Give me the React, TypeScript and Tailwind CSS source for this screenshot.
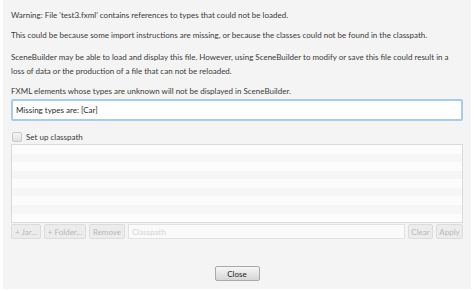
function SmallButton({ label, w }: { label: string; w: string }) {
  return (
    <div
      className={`${w} h-[15px] flex items-center justify-center rounded-[2px] border border-[#dcdcdc] bg-[#ececec] text-[8px] text-[#b8b8b8]`}
    >
      {label}
    </div>
  );
}

export default function App() {
  return (
    <div className="w-[474px] h-[291px] bg-white pl-[3px] pr-[3px] pb-[2px] font-[Lato,sans-serif]">
      <div className="h-full bg-[#f4f4f4] pl-[8px] pr-[8px] pt-[8px] text-[8px] leading-[14px] text-[#3a3a3a]">
        <p>Warning: File 'test3.fxml' contains references to types that could not be loaded.</p>
        <p className="mt-[6px]">
          This could be because some import instructions are missing, or because the classes could not be found in the classpath.
        </p>
        <p className="mt-[8px]">
          SceneBuilder may be able to load and display this file. However, using SceneBuilder to modify or save this file could result in a loss of data or the production of a file that can not be reloaded.
        </p>
        <p className="mt-[6px]">FXML elements whose types are unknown will not be displayed in SceneBuilder.</p>

        <div className="mt-[1px] h-[22px] rounded-[2px] border-2 border-[#a4cdec] bg-white pl-[3px] flex items-center text-[#2a2a2a]">
          Missing types are: [Car]
        </div>

        <div className="mt-[10px] flex items-center gap-[4px] h-[11px]">
          <div className="ml-[1px] w-[10px] h-[10px] rounded-[2px] border border-[#c8c8c8] bg-gradient-to-b from-[#f6f6f6] to-[#e0e0e0]" />
          <span>Set up classpath</span>
        </div>

        <div className="mt-[2px] h-[79px] border border-[#dadada] bg-white flex flex-col overflow-hidden">
          {[0, 1, 2, 3, 4, 5, 6, 7, 8].map((i) => (
            <div key={i} className={i % 2 === 0 ? 'h-[9px] bg-[#fcfcfc]' : 'h-[9px] bg-[#f6f6f6]'} />
          ))}
        </div>

        <div className="mt-[1px] flex gap-[3px]">
          <SmallButton label="+ Jar..." w="w-[30px]" />
          <SmallButton label="+ Folder..." w="w-[42px]" />
          <SmallButton label="Remove" w="w-[36px]" />
          <div className="flex-1 h-[15px] border border-[#e2e2e2] bg-[#fafafa] pl-[3px] flex items-center text-[8px] text-[#d4d4d4]">
            Classpath
          </div>
          <SmallButton label="Clear" w="w-[25px]" />
          <SmallButton label="Apply" w="w-[27px]" />
        </div>

        <div className="mt-[27px] flex justify-center">
          <div className="w-[45px] h-[15px] flex items-center justify-center rounded-[2px] border border-[#a9a9a9] bg-gradient-to-b from-[#f6f6f6] to-[#d6d6d6] text-[8px] text-[#222]">
            Close
          </div>
        </div>
      </div>
    </div>
  );
}
